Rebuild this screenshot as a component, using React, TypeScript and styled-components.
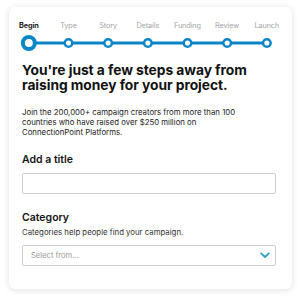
import styled, { createGlobalStyle } from "styled-components";

const GlobalStyle = createGlobalStyle`
  html, body {
    margin: 0;
    padding: 0;
    background: #ffffff;
  }
  body {
    font-family: "Inter", "Noto Sans", sans-serif;
    color: #1c1c1c;
  }
`;

const steps = ["Begin", "Type", "Story", "Details", "Funding", "Review", "Launch"];
const STEP_W = 39.67;
const BLUE = "#0a85c8";

const Page = styled.div`
  padding: 7px 8px 11px 9px;
`;

const Card = styled.div`
  height: 282px;
  box-sizing: border-box;
  background: #fff;
  border-radius: 6px;
  box-shadow: 0 1px 6px rgba(0, 0, 0, 0.13);
  padding: 14px 16px 0 13px;
`;

const Stepper = styled.div`
  margin-left: -13px;
  width: ${STEP_W * 7}px;
`;

const Labels = styled.div`
  display: grid;
  grid-template-columns: repeat(7, ${STEP_W}px);
  height: 10px;
`;

const Label = styled.span<{ $active?: boolean }>`
  text-align: center;
  font-size: 7.3px;
  line-height: 10px;
  letter-spacing: -0.1px;
  font-weight: ${(p) => (p.$active ? 700 : 400)};
  color: ${(p) => (p.$active ? "#1e1e1e" : "#a4a4a4")};
`;

const Track = styled.svg`
  display: block;
  margin-top: 3px;
`;

const Heading = styled.h1`
  margin: 11px 0 0;
  max-width: 235px;
  font-size: 13.8px;
  line-height: 14.5px;
  font-weight: 700;
  letter-spacing: -0.05px;
  color: #121212;
`;

const Intro = styled.p`
  margin: 15px 0 0;
  max-width: 235px;
  font-size: 7.8px;
  line-height: 10px;
  color: #222;
`;

const FieldLabel = styled.h2`
  margin: 0;
  font-size: 10.5px;
  line-height: 14px;
  font-weight: 600;
  color: #141414;
`;

const Field = styled.div<{ $top: number }>`
  margin-top: ${(p) => p.$top}px;
`;

const Hint = styled.div`
  font-size: 7.8px;
  line-height: 10px;
  color: #333;
  margin-top: 2px;
`;

const TextInput = styled.input`
  display: block;
  box-sizing: border-box;
  width: 100%;
  height: 21px;
  margin-top: 6px;
  border: 1px solid #cfcfcf;
  border-radius: 2px;
  outline: none;
  padding: 0 8px;
`;

const Select = styled.div`
  box-sizing: border-box;
  height: 21px;
  margin-top: 8px;
  border: 1px solid #cfcfcf;
  border-radius: 2px;
  padding: 0 5px 0 8px;
  display: flex;
  align-items: center;
  justify-content: space-between;
`;

const Placeholder = styled.span`
  font-size: 7.6px;
  color: #9a9a9a;
`;

const Chevron = () => (
  <svg width="10" height="7" viewBox="0 0 10 7">
    <path d="M1.2 1.4 L5 5 L8.8 1.4" fill="none" stroke="#2a9fc6" strokeWidth="1.8" strokeLinecap="round" strokeLinejoin="round" />
  </svg>
);

const App = () => {
  const centers = steps.map((_, i) => STEP_W * i + STEP_W / 2);
  return (
    <>
      <GlobalStyle />
      <Page>
        <Card>
          <Stepper>
            <Labels>
              {steps.map((s, i) => (
                <Label key={s} $active={i === 0}>
                  {s}
                </Label>
              ))}
            </Labels>
            <Track width={STEP_W * 7} height="18" viewBox={`0 0 ${STEP_W * 7} 18`}>
              <line x1={centers[0]} y1="9" x2={centers[6]} y2="9" stroke={BLUE} strokeWidth="3" />
              <circle cx={centers[0]} cy="9" r="6" fill="#fff" stroke={BLUE} strokeWidth="4" />
              {centers.slice(1).map((c) => (
                <circle key={c} cx={c} cy="9" r="3.8" fill="#fff" stroke={BLUE} strokeWidth="2.5" />
              ))}
            </Track>
          </Stepper>

          <Heading>You're just a few steps away from raising money for your project.</Heading>

          <Intro>
            Join the 200,000+ campaign creators from more than 100 countries who have raised over $250
            million on ConnectionPoint Platforms.
          </Intro>

          <Field $top={16}>
            <FieldLabel>Add a title</FieldLabel>
            <TextInput type="text" />
          </Field>

          <Field $top={17}>
            <FieldLabel>Category</FieldLabel>
            <Hint>Categories help people find your campaign.</Hint>
            <Select>
              <Placeholder>Select from...</Placeholder>
              <Chevron />
            </Select>
          </Field>
        </Card>
      </Page>
    </>
  );
};

export default App;
